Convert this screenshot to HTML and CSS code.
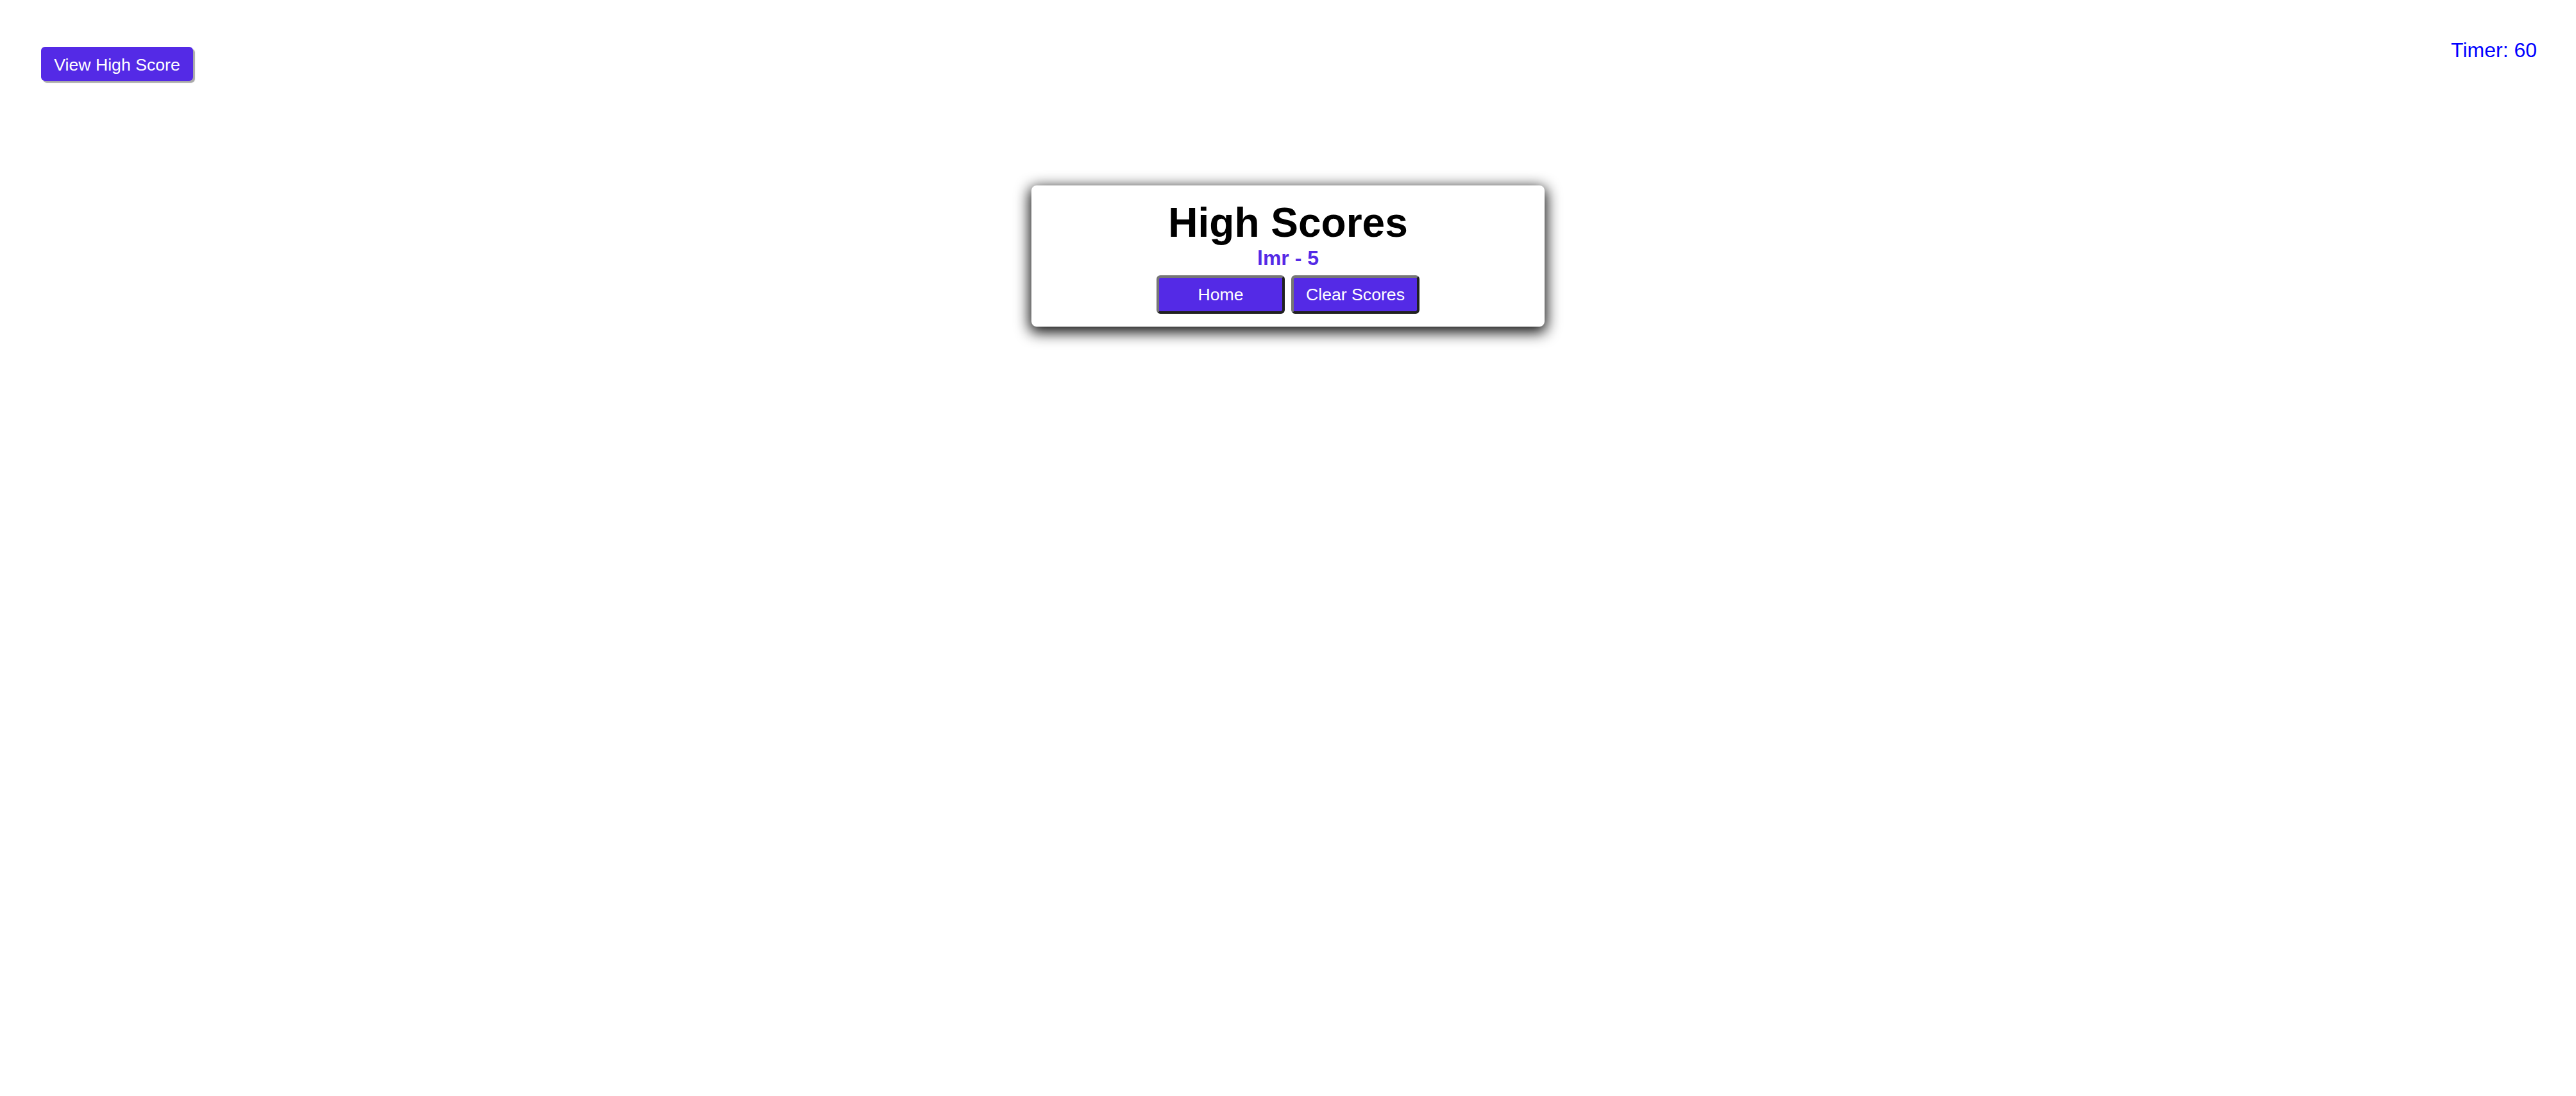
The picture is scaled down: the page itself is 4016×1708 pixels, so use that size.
FILE: index.html
```html
<!DOCTYPE html>
<html lang="en">
<head>
<meta charset="utf-8">
<title>Quiz - High Scores</title>
<link rel="stylesheet" href="styles.css">
</head>
<body>
<header class="top-bar">
  <button class="view-btn" type="button">View High Score</button>
  <div class="timer">Timer: 60</div>
</header>
<main class="main">
  <section class="card">
    <h1 class="card-title">High Scores</h1>
    <p class="score">lmr - 5</p>
    <div class="actions">
      <button class="action-btn" type="button">Home</button>
      <button class="action-btn" type="button">Clear Scores</button>
    </div>
  </section>
</main>
</body>
</html>
```

FILE: styles.css
```css
html, body {
  margin: 0;
  padding: 0;
  background: #ffffff;
  font-family: "Liberation Sans", Arial, sans-serif;
}

body {
  min-height: 1708px;
}

.top-bar {
  display: flex;
  justify-content: space-between;
  align-items: flex-start;
  padding: 60px 61px 0 64px;
}

.view-btn {
  margin-top: 13px;
  box-sizing: border-box;
  width: 237px;
  height: 53px;
  padding: 3px 0 0;
  border: none;
  border-radius: 6px;
  background: #542ae6;
  color: #ffffff;
  font-family: "Liberation Sans", Arial, sans-serif;
  font-size: 26.67px;
  box-shadow: 3px 3px 1px #a9a9a9;
  cursor: pointer;
}

.timer {
  color: #0000ff;
  font-size: 32px;
  line-height: 37px;
}

.main {
  display: flex;
  justify-content: center;
  padding: 163px 0 80px;
}

.card {
  box-sizing: border-box;
  width: 800px;
  height: 220px;
  padding: 22px 20px 20px;
  border-radius: 8px;
  background: #ffffff;
  box-shadow: 0 6px 22px 3px rgba(0, 0, 0, 0.95);
  display: flex;
  flex-direction: column;
  align-items: center;
  text-align: center;
}

.card-title {
  margin: 0;
  font-size: 64px;
  font-weight: bold;
  line-height: 73px;
  color: #000000;
}

.score {
  margin: 0;
  font-size: 32px;
  font-weight: bold;
  line-height: 37px;
  color: #542ae6;
}

.actions {
  display: flex;
  gap: 10px;
  margin-top: 8px;
}

.action-btn {
  box-sizing: border-box;
  width: 200px;
  height: 60px;
  padding: 0;
  border: 4px outset #767676;
  border-radius: 6px;
  background: #542ae6;
  color: #ffffff;
  font-family: "Liberation Sans", Arial, sans-serif;
  font-size: 26.67px;
  cursor: pointer;
}
```
